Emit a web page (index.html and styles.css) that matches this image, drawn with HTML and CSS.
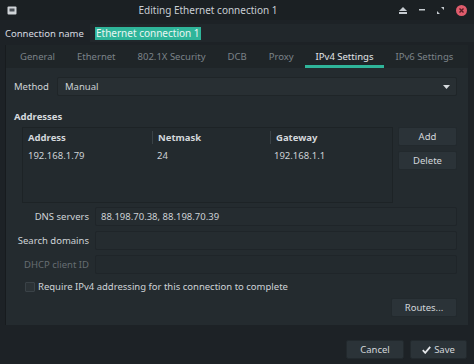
FILE: index.html
```html
<!DOCTYPE html>
<html lang="en">
<head>
  <meta charset="UTF-8">
  <title>Editing Ethernet connection 1</title>
  <link rel="stylesheet" href="styles.css">
</head>
<body>
  <div class="titlebar">
    <svg class="app-icon" width="10" height="9" viewBox="0 0 10 9">
      <rect x="0.5" y="0.5" width="9" height="8" rx="1" fill="#d0d4d8"/>
      <rect x="2.5" y="2.5" width="5" height="3" fill="#4a5056"/>
    </svg>
    <div class="title">Editing Ethernet connection 1</div>
    <div class="controls">
      <svg width="8" height="7" viewBox="0 0 8 7"><path d="M4 0 L8 4 L0 4 Z" fill="#c6cbd0"/><rect x="0" y="5" width="8" height="2" fill="#c6cbd0"/></svg>
      <svg width="6" height="2" viewBox="0 0 6 2"><rect width="6" height="1.5" fill="#c6cbd0"/></svg>
      <svg width="7" height="7" viewBox="0 0 7 7"><path d="M4 0 H7 V3 Z M0 4 V7 H3 Z" fill="#c6cbd0"/></svg>
      <svg width="11" height="11" viewBox="0 0 11 11"><circle cx="5.5" cy="5.5" r="5.5" fill="#e05c6c"/><path d="M3.5 3.5 L7.5 7.5 M7.5 3.5 L3.5 7.5" stroke="#5a1c24" stroke-width="1.4"/></svg>
    </div>
  </div>

  <div class="name-row">
    <label class="name-label">Connection name</label>
    <div class="name-input"><span class="selected">Ethernet connection 1</span></div>
  </div>

  <div class="tab-frame">
    <div class="tabbar">
      <div class="tab">General</div>
      <div class="tab">Ethernet</div>
      <div class="tab">802.1X Security</div>
      <div class="tab">DCB</div>
      <div class="tab">Proxy</div>
      <div class="tab active">IPv4 Settings</div>
      <div class="tab">IPv6 Settings</div>
    </div>

    <div class="panel">
      <div class="method-row">
        <span class="method-label">Method</span>
        <div class="combo">
          <span>Manual</span>
          <svg width="7" height="4" viewBox="0 0 7 4"><path d="M0 0 H7 L3.5 4 Z" fill="#d6dade"/></svg>
        </div>
      </div>

      <div class="section-title">Addresses</div>

      <div class="addr-area">
        <div class="addr-table">
          <div class="addr-head">
            <div class="col c1">Address</div>
            <div class="col c2">Netmask</div>
            <div class="col c3">Gateway</div>
          </div>
          <div class="addr-row">
            <div class="col c1">192.168.1.79</div>
            <div class="col c2">24</div>
            <div class="col c3">192.168.1.1</div>
          </div>
        </div>
        <div class="addr-buttons">
          <button class="btn">Add</button>
          <button class="btn">Delete</button>
        </div>
      </div>

      <div class="form-rows">
        <div class="form-row">
          <label class="form-label">DNS servers</label>
          <div class="field">88.198.70.38, 88.198.70.39</div>
        </div>
        <div class="form-row">
          <label class="form-label">Search domains</label>
          <div class="field"></div>
        </div>
        <div class="form-row disabled">
          <label class="form-label">DHCP client ID</label>
          <div class="field"></div>
        </div>
      </div>

      <div class="check-row">
        <span class="checkbox"></span>
        <span>Require IPv4 addressing for this connection to complete</span>
      </div>

      <div class="routes-row">
        <button class="btn routes">Routes...</button>
      </div>
    </div>
  </div>

  <div class="footer">
    <button class="btn cancel">Cancel</button>
    <button class="btn save">
      <svg width="9" height="8" viewBox="0 0 9 8"><path d="M0.8 4.2 L3.2 6.8 L8.2 0.8" stroke="#e4e7ea" stroke-width="1.8" fill="none"/></svg>
      Save
    </button>
  </div>
</body>
</html>
```

FILE: styles.css
```css
body {
  margin: 0;
  width: 474px;
  height: 364px;
  overflow: hidden;
  background-color: #1d2226;
  color: #cdd2d6;
  font-family: "Noto Sans", sans-serif;
  font-size: 9.5px;
}
.titlebar {
  height: 20px;
  display: flex;
  align-items: center;
  background-color: #1b2023;
}
.app-icon {
  margin-left: 7px;
}
.title {
  flex: 1;
  text-align: center;
  color: #c9ced3;
  font-size: 10px;
}
.controls {
  display: flex;
  align-items: center;
  gap: 12px;
  margin-right: 7px;
}
.name-row {
  display: flex;
  align-items: center;
  margin-top: 4px;
  height: 18px;
}
.name-label {
  width: 85px;
  padding-left: 5px;
  color: #d8dce0;
  font-size: 9.5px;
}
.name-input {
  flex: 1;
  height: 18px;
  display: flex;
  align-items: center;
  padding-left: 5px;
  background-color: #21272b;
  font-size: 10px;
}
.selected {
  background-color: #2fb59a;
  color: #eaf6f3;
  padding: 0 1px;
  line-height: 13px;
}
.tab-frame {
  margin: 3px 6px 0 5px;
  border-left: 1px solid #171b1e;
}
.tabbar {
  display: flex;
  height: 23px;
  padding-left: 3px;
  background-color: #1f2528;
}
.tab {
  padding: 2px 11px 0;
  display: flex;
  align-items: center;
  color: #7c8388;
  border-bottom: 3px solid transparent;
}
.tab.active {
  color: #e2e5e8;
  border-bottom-color: #2fb59a;
}
.panel {
  background-color: #242b2f;
  padding: 9px 11px 0 8px;
  height: 248px;
}
.method-row {
  display: flex;
  align-items: center;
  height: 19px;
}
.method-label {
  width: 43px;
  color: #cfd3d7;
}
.combo {
  flex: 1;
  height: 19px;
  display: flex;
  align-items: center;
  justify-content: space-between;
  padding: 0 6px 0 7px;
  background-color: #282f33;
  border: 1px solid #1f2528;
  border-radius: 2px;
  box-sizing: border-box;
}
.section-title {
  margin-top: 14px;
  font-weight: bold;
  color: #d6dade;
  height: 13px;
  line-height: 13px;
}
.addr-area {
  display: flex;
  gap: 5px;
  margin-top: 4px;
  margin-left: 8px;
}
.addr-table {
  width: 374px;
  height: 76px;
  box-sizing: border-box;
  border: 1px solid #1d2326;
  background-color: #232a2e;
}
.addr-head, .addr-row {
  display: flex;
  height: 18px;
  align-items: center;
}
.addr-head {
  font-weight: bold;
  color: #d3d7db;
}
.col {
  padding-left: 5px;
}
.c1 { width: 124px; }
.c2 { width: 112px; }
.c3 { flex: 1; }
.addr-head .c2, .addr-head .c3 {
  border-left: 1px solid #3a4246;
}
.addr-buttons {
  display: flex;
  flex-direction: column;
  gap: 5px;
}
.btn {
  font-family: "Noto Sans", sans-serif;
  font-size: 9.5px;
  color: #d3d7db;
  background-color: #2b3338;
  border: 1px solid #22292d;
  border-radius: 2px;
  height: 19px;
  padding: 0;
}
.addr-buttons .btn {
  width: 59px;
}
.form-rows {
  display: flex;
  flex-direction: column;
  gap: 5px;
  margin-top: 4px;
}
.form-row {
  display: flex;
  align-items: center;
}
.form-label {
  width: 75px;
  text-align: right;
  margin-right: 6px;
  color: #cfd3d7;
}
.field {
  flex: 1;
  height: 19px;
  box-sizing: border-box;
  display: flex;
  align-items: center;
  padding-left: 5px;
  background-color: #252c30;
  border: 1px solid #1f2529;
  border-radius: 2px;
}
.form-row.disabled .form-label {
  color: #666d72;
}
.form-row.disabled .field {
  background-color: #232a2e;
}
.check-row {
  display: flex;
  align-items: center;
  gap: 3px;
  margin-top: 6px;
  margin-left: 11px;
  color: #cfd3d7;
}
.checkbox {
  width: 8px;
  height: 8px;
  border: 1px solid #3a4247;
  background-color: #2b3236;
  border-radius: 1px;
}
.routes-row {
  display: flex;
  justify-content: flex-end;
  margin-top: 5px;
}
.btn.routes {
  width: 66px;
}
.footer {
  display: flex;
  justify-content: flex-end;
  gap: 6px;
  margin-top: 15px;
  margin-right: 7px;
}
.btn.cancel {
  width: 58px;
}
.btn.save {
  width: 57px;
  display: flex;
  align-items: center;
  justify-content: center;
  gap: 3px;
}
```
